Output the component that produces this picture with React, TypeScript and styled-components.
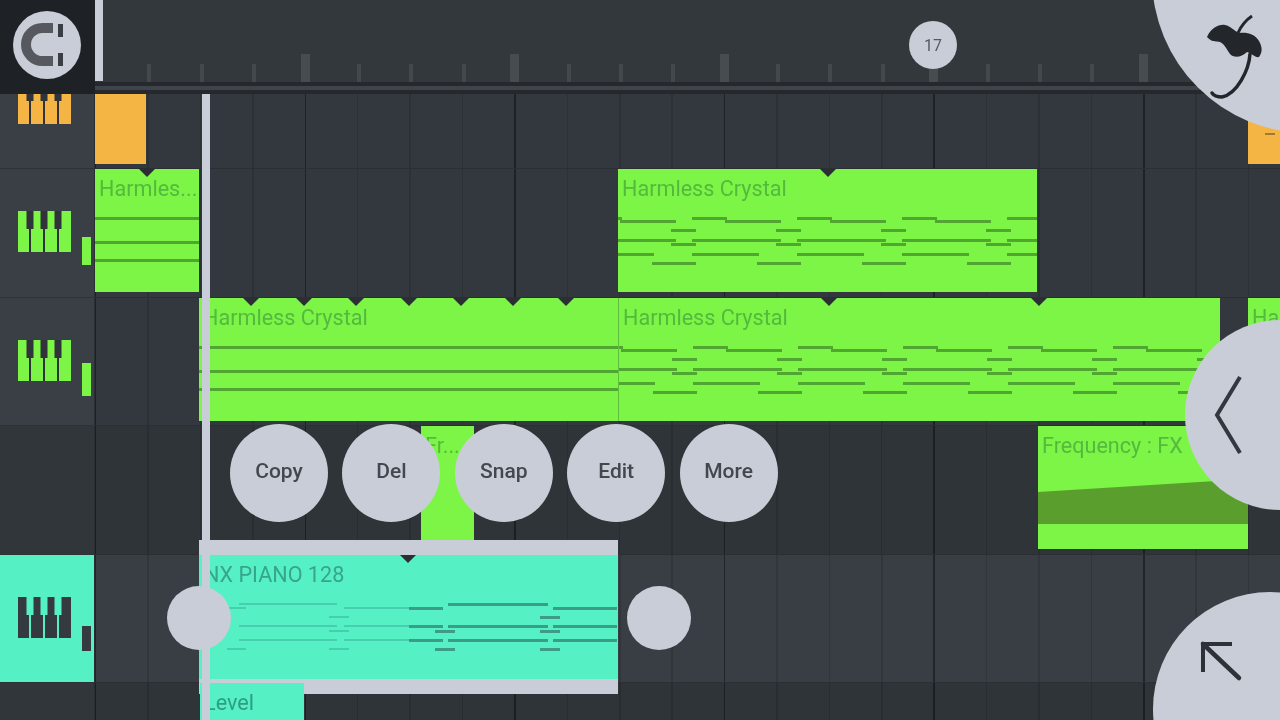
import styled, { createGlobalStyle } from 'styled-components';

const BEAT = 52.4;
const ROW = 128.4;

const GlobalStyle = createGlobalStyle`
  html, body {
    margin: 0;
    background: #33383e;
  }
`;

const Page = styled.div`
  position: relative;
  width: 1280px;
  height: 720px;
  overflow: hidden;
  display: flex;
  flex-direction: column;
  font-family: Roboto, "Liberation Sans", sans-serif;
  filter: blur(0.5px);
`;

const TopBar = styled.div`
  display: flex;
  flex: none;
  height: 94px;
`;

const Corner = styled.div`
  flex: none;
  width: 95px;
  display: flex;
  align-items: center;
  justify-content: center;
  background: #1e2227;
`;

const SnapButton = styled.div`
  width: 68px;
  height: 68px;
  margin: -4px 2px 0 0;
  border-radius: 50%;
  background: #c9cdd8;
  display: flex;
`;

const Ruler = styled.div`
  position: relative;
  flex: 1;
  display: flex;
  flex-direction: column;
  background: #33383d;
`;

const Ticks = styled.div`
  display: flex;
  align-items: flex-end;
  height: 82px;
  flex: none;
`;

const TickCell = styled.div`
  flex: none;
  width: ${BEAT}px;
  display: flex;
`;

const Tick = styled.div<{ $major: boolean }>`
  width: ${(p) => (p.$major ? 9 : 4)}px;
  height: ${(p) => (p.$major ? 28 : 18)}px;
  margin-left: ${(p) => (p.$major ? -4 : 0)}px;
  background: ${(p) => (p.$major ? '#474c50' : '#43484c')};
`;

const RulerStrip = styled.div`
  flex: 1;
  border-top: 4px solid #25282c;
  border-bottom: 4px solid #25282c;
  background: #3f444a;
`;

const RulerPlayhead = styled.div`
  position: absolute;
  left: 0;
  top: 0;
  width: 8px;
  height: 81px;
  background: #c9cdd8;
`;

const BarBadge = styled.div`
  position: absolute;
  left: 814px;
  top: 21px;
  width: 48px;
  height: 48px;
  border-radius: 50%;
  background: #c9cdd8;
  color: #565a60;
  font-size: 16px;
  display: flex;
  align-items: center;
  justify-content: center;
`;

const TrackArea = styled.div`
  flex: 1;
  overflow: hidden;
`;

const Rows = styled.div`
  margin-top: -54px;
`;

const Row = styled.div`
  display: flex;
  height: ${ROW}px;
`;

const Header = styled.div<{ $bg?: string }>`
  flex: none;
  width: 95px;
  box-sizing: border-box;
  display: flex;
  gap: 11px;
  padding: 42px 0 0 18px;
  background: ${(p) => p.$bg || '#3a3f46'};
  border-top: 1px solid #2e3237;
  border-right: 1px solid #2a2e33;
`;

const Level = styled.div<{ $color: string; $offset: number; $h: number }>`
  width: 9px;
  margin-top: ${(p) => p.$offset}px;
  height: ${(p) => p.$h}px;
  background: ${(p) => p.$color};
`;

const Lane = styled.div<{ $bg: string }>`
  position: relative;
  flex: 1;
  border-top: 1px solid #2b2f34;
  background:
    repeating-linear-gradient(90deg, rgba(0, 0, 0, 0.32) 0 1.5px, transparent 1.5px ${BEAT * 4}px),
    repeating-linear-gradient(90deg, rgba(0, 0, 0, 0.13) 0 1.5px, transparent 1.5px ${BEAT}px),
    ${(p) => p.$bg};
`;

const Clip = styled.div<{ $x: number; $w: number; $bg: string; $edge?: boolean }>`
  position: absolute;
  left: ${(p) => p.$x}px;
  width: ${(p) => p.$w}px;
  top: 0;
  height: 123px;
  overflow: hidden;
  background: ${(p) => p.$bg};
  border-left: ${(p) => (p.$edge ? '1px solid #5fbf3c' : 'none')};
  box-sizing: border-box;
`;

const ClipTitle = styled.div<{ $color: string }>`
  padding: 8px 0 0 4px;
  font-size: 21.6px;
  line-height: 24px;
  white-space: nowrap;
  color: ${(p) => p.$color};
`;

const Preview = styled.svg`
  position: absolute;
  left: 0;
  top: 0;
`;

const Notch = styled.div<{ $x: number }>`
  position: absolute;
  left: ${(p) => p.$x - 8}px;
  top: 0;
  width: 0;
  height: 0;
  border-left: 8px solid transparent;
  border-right: 8px solid transparent;
  border-top: 8px solid #2b2f34;
`;

const ClipDash = styled.div`
  position: absolute;
  left: 17px;
  top: 92px;
  width: 10px;
  height: 2px;
  background: #9c7a38;
`;

const SelectionFrame = styled.div`
  position: absolute;
  z-index: 1;
  left: 104px;
  top: -15px;
  width: 419px;
  height: 154px;
  box-sizing: border-box;
  padding: 15px 0;
  background: #c9cdd8;
`;

const SelectedClip = styled.div`
  position: relative;
  height: 124px;
  overflow: hidden;
  background: #55f0c3;
  padding-left: 1px;
`;

const LevelClip = styled.div`
  position: absolute;
  z-index: 2;
  left: 105px;
  top: 0;
  width: 104px;
  height: 60px;
  background: #55f0c3;
`;

const Playhead = styled.div`
  position: absolute;
  z-index: 3;
  left: 202px;
  top: 94px;
  bottom: 0;
  width: 8px;
  background: #c9cdd8;
`;

const Handle = styled.div<{ $x: number }>`
  position: absolute;
  z-index: 4;
  left: ${(p) => p.$x - 32}px;
  top: 586px;
  width: 64px;
  height: 64px;
  border-radius: 50%;
  background: #c9cdd8;
`;

const Menu = styled.div`
  position: absolute;
  z-index: 5;
  left: 230px;
  top: 424px;
  display: flex;
  gap: 14.4px;
`;

const MenuButton = styled.div`
  width: 98px;
  height: 98px;
  border-radius: 50%;
  background: #c9cdd8;
  color: #43474e;
  font-size: 21px;
  font-weight: 500;
  display: flex;
  align-items: center;
  justify-content: center;
  padding-bottom: 4px;
  box-sizing: border-box;
`;

const CornerDisc = styled.div<{ $cx: number; $cy: number; $r: number }>`
  position: absolute;
  z-index: 6;
  left: ${(p) => p.$cx - p.$r}px;
  top: ${(p) => p.$cy - p.$r}px;
  width: ${(p) => p.$r * 2}px;
  height: ${(p) => p.$r * 2}px;
  border-radius: 50%;
  background: #c9cdd8;
`;

const DiscIcon = styled.svg<{ $x: number; $y: number }>`
  position: absolute;
  left: ${(p) => p.$x}px;
  top: ${(p) => p.$y}px;
`;

const GREEN = '#7cf547';
const GREEN_TEXT = '#55b93d';
const GREEN_NOTE = '#50a630';
const TEAL = '#55f0c3';
const TEAL_TEXT = '#37a58c';
const ORANGE = '#f4b545';
const KEY_GAP = '#30343a';

// one bar of the arpeggio seen in the green clips: [y, x, width]
const CRYSTAL: [number, number, number][] = [
  [48, 74, 35],
  [51, 107, 56],
  [60, 53, 25],
  [70, 74, 89],
  [74, 53, 25],
  [84, 74, 67],
  [93, 34, 44],
];

const PIANO_DARK: [number, number, number][] = [
  [48, 249, 100],
  [52, 210, 34],
  [52, 354, 64],
  [61, 341, 20],
  [70, 210, 34],
  [70, 249, 100],
  [70, 354, 64],
  [75, 236, 20],
  [75, 341, 20],
  [84, 210, 34],
  [84, 249, 100],
  [84, 354, 64],
  [93, 236, 20],
  [93, 341, 20],
];

const PIANO_FAINT: [number, number, number][] = [
  [48, 40, 98],
  [52, 30, 17],
  [52, 145, 65],
  [61, 130, 20],
  [70, 40, 98],
  [70, 145, 65],
  [75, 130, 20],
  [84, 40, 98],
  [84, 145, 65],
  [93, 28, 19],
  [93, 130, 20],
];

const PianoIcon = ({ color, gap }: { color: string; gap: string }) => (
  <svg width="53" height="41" viewBox="0 0 53 41">
    <rect x="0" y="0" width="53" height="41" fill={color} />
    {[12, 26, 40].map((x) => (
      <g key={x}>
        <rect x={x - 1} y="18" width="2" height="23" fill={gap} />
        <rect x={x - 3.5} y="0" width="7" height="18" fill={gap} />
      </g>
    ))}
  </svg>
);

const CrystalNotes = ({ width }: { width: number }) => {
  const bars = Array.from({ length: Math.ceil(width / 105) + 2 }, (_, i) => (i - 1) * 105);
  return (
    <Preview width={width} height="123">
      {bars.map((bx) =>
        CRYSTAL.map(([y, x, w]) => <rect key={`${bx}-${y}-${x}`} x={bx + x} y={y} width={w} height="3" fill={GREEN_NOTE} />),
      )}
    </Preview>
  );
};

const HeldNotes = ({ width }: { width: number }) => (
  <Preview width={width} height="123">
    {[48, 72, 90].map((y) => (
      <rect key={y} x="0" y={y} width={width} height="3" fill={GREEN_NOTE} />
    ))}
  </Preview>
);

const Beats = (count: number) => Array.from({ length: count }, (_, i) => (i + 1) * BEAT);

export default function App() {
  return (
    <Page>
      <GlobalStyle />
      <TopBar>
        <Corner>
          <SnapButton>
            <svg width="68" height="68" viewBox="0 0 68 68">
              <path d="M40 17H29.5a16.5 16.5 0 0 0 0 33H40" fill="none" stroke="#55595f" strokeWidth="10" />
              <rect x="45" y="13" width="5" height="13" fill="#3a3e44" />
              <rect x="45" y="42" width="5" height="13" fill="#3a3e44" />
            </svg>
          </SnapButton>
        </Corner>
        <Ruler>
          <Ticks>
            <TickCell />
            {Array.from({ length: 22 }, (_, i) => (
              <TickCell key={i}>
                <Tick $major={(i + 1) % 4 === 0} />
              </TickCell>
            ))}
          </Ticks>
          <RulerStrip />
          <RulerPlayhead />
          <BarBadge>17</BarBadge>
        </Ruler>
      </TopBar>

      <TrackArea>
        <Rows>
          <Row>
            <Header>
              <PianoIcon color={ORANGE} gap={KEY_GAP} />
            </Header>
            <Lane $bg="#33383e">
              <Clip $x={0} $w={51} $bg={ORANGE} />
              <Clip $x={1153} $w={100} $bg={ORANGE}>
                <ClipDash />
              </Clip>
            </Lane>
          </Row>

          <Row>
            <Header>
              <PianoIcon color={GREEN} gap={KEY_GAP} />
              <Level $color={GREEN} $offset={26} $h={28} />
            </Header>
            <Lane $bg="#33383e">
              <Clip $x={0} $w={104} $bg={GREEN}>
                <ClipTitle $color={GREEN_TEXT}>Harmles...</ClipTitle>
                <HeldNotes width={104} />
                <Notch $x={52} />
              </Clip>
              <Clip $x={523} $w={419} $bg={GREEN}>
                <ClipTitle $color={GREEN_TEXT}>Harmless Crystal</ClipTitle>
                <CrystalNotes width={419} />
                <Notch $x={210} />
              </Clip>
            </Lane>
          </Row>

          <Row>
            <Header>
              <PianoIcon color={GREEN} gap={KEY_GAP} />
              <Level $color={GREEN} $offset={23} $h={33} />
            </Header>
            <Lane $bg="#33383e">
              <Clip $x={104} $w={419} $bg={GREEN}>
                <ClipTitle $color={GREEN_TEXT}>Harmless Crystal</ClipTitle>
                <HeldNotes width={419} />
                {Beats(7).map((x) => (
                  <Notch key={x} $x={x} />
                ))}
              </Clip>
              <Clip $x={523} $w={602} $bg={GREEN} $edge>
                <ClipTitle $color={GREEN_TEXT}>Harmless Crystal</ClipTitle>
                <CrystalNotes width={602} />
                <Notch $x={210} />
                <Notch $x={420} />
              </Clip>
              <Clip $x={1153} $w={100} $bg={GREEN}>
                <ClipTitle $color={GREEN_TEXT}>Ha</ClipTitle>
              </Clip>
            </Lane>
          </Row>

          <Row>
            <Header $bg="#31363b" />
            <Lane $bg="#2f3439">
              <Clip $x={326} $w={53} $bg={GREEN}>
                <ClipTitle $color={GREEN_TEXT}>Fr...</ClipTitle>
              </Clip>
              <Clip $x={943} $w={210} $bg={GREEN}>
                <ClipTitle $color={GREEN_TEXT}>Frequency : FX</ClipTitle>
                <Preview width="210" height="123">
                  <polygon points="0,66 210,53 210,98 0,98" fill="#5a9f2e" />
                </Preview>
              </Clip>
            </Lane>
          </Row>

          <Row>
            <Header $bg={TEAL}>
              <PianoIcon color="#343a40" gap={TEAL} />
              <Level $color="#343a40" $offset={29} $h={25} />
            </Header>
            <Lane $bg="#383e44">
              <SelectionFrame>
                <SelectedClip>
                  <ClipTitle $color={TEAL_TEXT}>NX PIANO 128</ClipTitle>
                  <Preview width="419" height="124">
                    {PIANO_FAINT.map(([y, x, w]) => (
                      <rect key={`${y}-${x}`} x={x} y={y} width={w} height="2" fill="#45cfae" />
                    ))}
                    {PIANO_DARK.map(([y, x, w]) => (
                      <rect key={`${y}-${x}`} x={x} y={y} width={w} height="3" fill="#3d9c88" />
                    ))}
                  </Preview>
                  <Notch $x={209} />
                </SelectedClip>
              </SelectionFrame>
            </Lane>
          </Row>

          <Row>
            <Header $bg="#31363b" />
            <Lane $bg="#2f3439">
              <LevelClip>
                <ClipTitle $color="#2f9d83">Level</ClipTitle>
              </LevelClip>
            </Lane>
          </Row>
        </Rows>
      </TrackArea>

      <Playhead />
      <Handle $x={199} />
      <Handle $x={659} />

      <Menu>
        <MenuButton>Copy</MenuButton>
        <MenuButton>Del</MenuButton>
        <MenuButton>Snap</MenuButton>
        <MenuButton>Edit</MenuButton>
        <MenuButton>More</MenuButton>
      </Menu>

      <CornerDisc $cx={1308} $cy={-23} $r={156}>
        <DiscIcon $x={53} $y={191} width="62" height="92" viewBox="0 0 62 92">
          <path
            d="M2 25C6 16 14 12 20 13C26 14 29 19 34 21C42 20 50 22 54 29C57 34 58 40 54 45C50 46 47 41 42 40C37 45 30 46 26 43C22 39 21 33 15 30C11 29 8 31 2 25Z"
            fill="#23272c"
          />
          <path d="M33 21C36 14 41 8 47 4" fill="none" stroke="#23272c" strokeWidth="3" />
          <path d="M45 42C44 58 32 82 17 85C13 85 9 84 7 81" fill="none" stroke="#23272c" strokeWidth="3.5" strokeLinecap="round" />
        </DiscIcon>
      </CornerDisc>

      <CornerDisc $cx={1280} $cy={415} $r={95}>
        <DiscIcon $x={28} $y={53} width="34" height="84" viewBox="0 0 34 84">
          <path d="M27 4L4 42L27 80" fill="none" stroke="#33383e" strokeWidth="4" />
        </DiscIcon>
      </CornerDisc>

      <CornerDisc $cx={1270} $cy={709} $r={117}>
        <DiscIcon $x={46} $y={48} width="48" height="48" viewBox="0 0 48 48">
          <path d="M33 4H4V32" fill="none" stroke="#2e3238" strokeWidth="4" />
          <path d="M4 4L40 38" fill="none" stroke="#2e3238" strokeWidth="4.5" strokeLinecap="round" />
        </DiscIcon>
      </CornerDisc>
    </Page>
  );
}
